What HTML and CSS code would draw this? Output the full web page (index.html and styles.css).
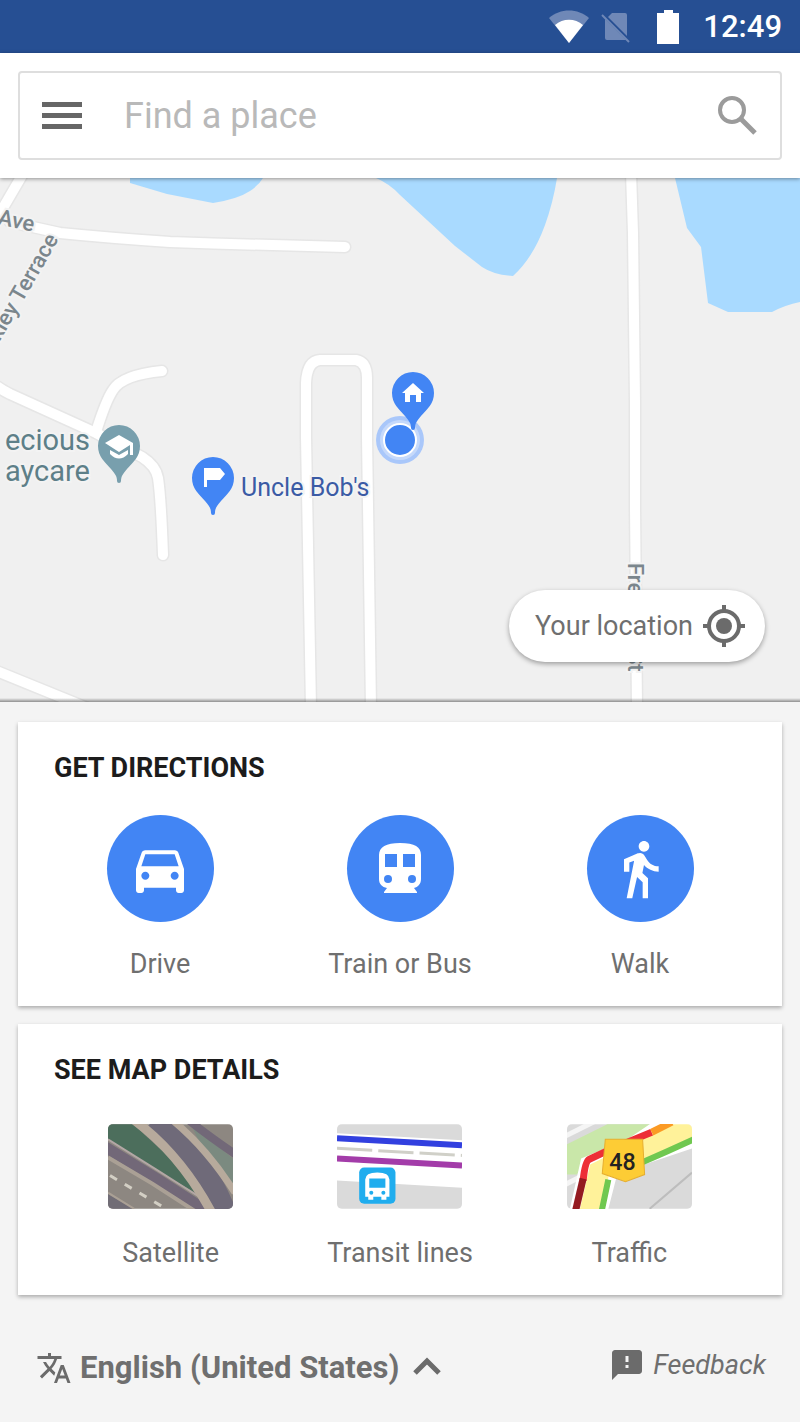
FILE: index.html
```
<!DOCTYPE html>
<html lang="en">
<head>
    <meta charset="UTF-8">
    <meta name="viewport" content="width=device-width, initial-scale=1.0">
    <title>Maps Go</title>
    <link rel="stylesheet" href="styles.css">
</head>
<body>
    <div class="status-bar">
        <svg class="wifi" width="40" height="34" viewBox="0 0 40 34">
            <path fill="#6f88b7" d="M0 8C11-2 29-2 40 8L20 33z"/>
            <path fill="#fff" d="M6 15C14 8 26 8 34 15L20 33z"/>
        </svg>
        <svg class="sim" width="30" height="34" viewBox="0 0 30 34">
            <path fill="#6f88b7" d="M11 3h13a2 2 0 0 1 2 2v21L7 7zM4 9l21 21H6a2 2 0 0 1-2-2z"/>
            <path stroke="#6f88b7" stroke-width="2" d="M1 5l27 27"/>
        </svg>
        <svg class="battery" width="22" height="34" viewBox="0 0 22 34">
            <path fill="#fff" d="M7 0h9v3h6v31H0V3h7z"/>
        </svg>
        <span class="time">12:49</span>
    </div>

    <header>
        <form class="search" role="search">
            <button type="button" class="icon-button" aria-label="Menu">
                <svg width="40" height="28" viewBox="0 0 40 28" fill="#666">
                    <path d="M0 0h40v5H0zM0 11h40v5H0zM0 22h40v5H0z"/>
                </svg>
            </button>
            <input type="text" placeholder="Find a place" aria-label="Find a place">
            <button type="submit" class="icon-button" aria-label="Search">
                <svg width="40" height="40" viewBox="0 0 40 40" fill="none" stroke="#9b9b9b">
                    <circle cx="14" cy="14" r="12" stroke-width="4"/>
                    <path stroke-width="5" d="M23 23l14 14"/>
                </svg>
            </button>
        </form>
    </header>

    <main>
        <section class="map">
            <svg class="map-canvas" viewBox="0 0 800 524" preserveAspectRatio="xMinYMin slice">
                <defs>
                    <path id="pin" d="M0-21a21 21 0 0 1 21 21c0 11-7 16-13 23-4 5-6 7-6 12a2 2 0 0 1-4 0c0-5-2-7-6-12-6-7-13-12-13-23A21 21 0 0 1 0-21z"/>
                    <g id="roads">
                        <path d="M24-6L-4 42"/>
                        <path d="M10 44L60 55Q110 60 170 64Q260 67 345 69"/>
                        <path d="M-6 206Q0 211 10 216L96 255L142 279Q156 288 158 300Q161 320 163 377"/>
                        <path d="M96 254Q106 222 113 212Q122 197 162 193"/>
                        <path d="M311 530L306 259V205Q307 183 320 182H356Q367 184 367 200V259L371 530"/>
                        <path d="M631-6L633 55L635 225V330L637 530"/>
                        <path d="M-6 492L90 531"/>
                    </g>
                </defs>

                <!-- water -->
                <g fill="#a9daff">
                    <path d="M130 0V5L167 16L213 25Q238 21 250 13Q259 7 263 0z"/>
                    <path d="M376 0Q390 6 400 17L455 68L482 89Q494 97 513 98Q533 80 545 47Q553 25 557 0z"/>
                    <path d="M675 0L687 50L701 69L708 125L728 134H772Q785 127 800 124V0z"/>
                </g>

                <!-- roads -->
                <use href="#roads" class="road-edge"/>
                <use href="#roads" class="road"/>

                <!-- street names -->
                <g class="street">
                    <text transform="translate(-3 46) rotate(12)">Ave</text>
                    <text transform="translate(59 61) rotate(-60)" text-anchor="end">kley Terrace</text>
                    <text transform="translate(628 385) rotate(90)">Fremont St</text>
                </g>

                <!-- places -->
                <g class="place place-school">
                    <text x="90" y="272" text-anchor="end">ecious</text>
                    <text x="90" y="303" text-anchor="end">aycare</text>
                </g>
                <g transform="translate(119 268)">
                    <use href="#pin" fill="#789fad"/>
                    <path fill="#fff" d="M-14-3L0-11L14-3V9h-3V-1L0 6zM-9 4L0 9L9 4V8Q0 17-9 8z"/>
                </g>

                <g transform="translate(213 300)">
                    <use href="#pin" fill="#4285f4"/>
                    <path fill="#fff" d="M-9-10H7L12-4L7 2H-6V9h-3z"/>
                </g>
                <text class="place place-saved" x="241" y="318">Uncle Bob's</text>

                <circle cx="400" cy="262" r="24" fill="#a9c7fa"/>
                <circle cx="400" cy="262" r="20" fill="#c5d9fb"/>
                <circle cx="400" cy="262" r="16" fill="#4285f4" stroke="#fff" stroke-width="2"/>

                <g transform="translate(413 215)">
                    <use href="#pin" fill="#4285f4"/>
                    <path fill="#fff" d="M0-10L11 0H8V9H3V2H-3V9H-8V0H-11z"/>
                </g>
            </svg>

            <button type="button" class="location">
                Your location
                <svg width="42" height="42" viewBox="0 0 42 42" fill="none" stroke="#6b6b6b" stroke-width="4">
                    <circle cx="21" cy="21" r="15"/>
                    <circle cx="21" cy="21" r="8" fill="#6b6b6b" stroke="none"/>
                    <path d="M21 0v6M21 36v6M0 21h6M36 21h6"/>
                </svg>
            </button>
        </section>

        <section class="card directions">
            <h2>GET DIRECTIONS</h2>
            <div class="options">
                <button type="button" class="option">
                    <span class="circle">
                        <svg width="64" height="64" viewBox="0 0 24 24" fill="#fff">
                            <path d="M18.92 6.01C18.72 5.42 18.16 5 17.5 5h-11c-.66 0-1.21.42-1.42 1.01L3 12v8c0 .55.45 1 1 1h1c.55 0 1-.45 1-1v-1h12v1c0 .55.45 1 1 1h1c.55 0 1-.45 1-1v-8l-2.08-5.99zM6.5 16c-.83 0-1.5-.67-1.5-1.5S5.67 13 6.5 13s1.5.67 1.5 1.5S7.33 16 6.5 16zm11 0c-.83 0-1.5-.67-1.5-1.5s.67-1.5 1.5-1.5 1.5.67 1.5 1.5-.67 1.5-1.5 1.5zM5 11l1.5-4.5h11L19 11H5z"/>
                        </svg>
                    </span>
                    Drive
                </button>
                <button type="button" class="option">
                    <span class="circle">
                        <svg width="64" height="64" viewBox="0 0 64 64">
                            <path fill="#fff" d="M32 6c15 0 21 4 21 12v24c0 5-3 8-7 9l3 4v1H16v-1l3-4c-5-1-8-4-8-9V18C11 10 18 6 32 6z"/>
                            <path fill="#4285f4" d="M17 17h12v13H17zM35 17h12v13H35z"/>
                            <circle cx="20" cy="42" r="4" fill="#4285f4"/>
                            <circle cx="44" cy="42" r="4" fill="#4285f4"/>
                        </svg>
                    </span>
                    Train or Bus
                </button>
                <button type="button" class="option">
                    <span class="circle">
                        <svg width="64" height="64" viewBox="0 0 24 24" fill="#fff">
                            <path d="M13.5 5.5c1.1 0 2-.9 2-2s-.9-2-2-2-2 .9-2 2 .9 2 2 2zM9.8 8.9L7 23h2.1l1.8-8 2.1 2v6h2v-7.5l-2.1-2 .6-3C14.8 12 16.8 13 19 13v-2c-1.9 0-3.5-1-4.3-2.4l-1-1.6c-.4-.6-1-1-1.7-1-.3 0-.5.1-.8.1L6 8.3V13h2V9.6l1.8-.7"/>
                        </svg>
                    </span>
                    Walk
                </button>
            </div>
        </section>

        <section class="card details">
            <h2>SEE MAP DETAILS</h2>
            <div class="options">
                <button type="button" class="option">
                    <svg class="thumb" viewBox="0 0 124 84">
                        <path fill="#8d8781" d="M0 0h124v84H0z"/>
                        <path fill="#4c6e5c" d="M0 0h25L60 32L90 70L50 47L0 15z"/>
                        <path fill="#7b8a80" d="M82 0L124 34V62L96 28z"/>
                        <path fill="none" stroke="#726878" stroke-width="8" d="M80-4Q100 12 128 31"/>
                        <path fill="none" stroke="#6f6a79" stroke-width="26" d="M46-6Q92 30 116 92"/>
                        <path fill="none" stroke="#726878" stroke-width="11" d="M-4 22L48 54L98 86"/>
                        <path fill="none" stroke="#b3a7a5" stroke-width="2" d="M0 15L48 45L92 73"/>
                        <path fill="none" stroke="#b7aa9c" stroke-width="9" d="M26-4Q72 30 103 88"/>
                        <path fill="none" stroke="#b7aa9c" stroke-width="7" d="M64-4Q98 24 126 68"/>
                        <path fill="none" stroke="#aaa095" stroke-width="4" d="M0 33L44 59L86 86"/>
                        <path fill="none" stroke="#d3cfc4" stroke-width="3" stroke-dasharray="8 9" d="M2 51L56 83"/>
                        <path fill="#716d76" d="M0 69L25 84H0z"/>
                        <path fill="none" stroke="#aaa095" stroke-width="2" d="M0 68L26 84"/>
                    </svg>
                    Satellite
                </button>
                <button type="button" class="option">
                    <svg class="thumb" viewBox="0 0 124 84">
                        <path fill="#dadada" d="M0 0h124v84H0z"/>
                        <path fill="#fff" d="M0 9L124 16V63L0 56z"/>
                        <path stroke="#3240df" stroke-width="6" d="M0 14L124 21"/>
                        <path stroke="#a33ca9" stroke-width="6" d="M0 34L124 41"/>
                        <path stroke="#d0d0c8" stroke-width="3" stroke-dasharray="35 6" d="M0 24L124 31"/>
                        <rect x="22" y="43" width="36" height="36" rx="5" fill="#20adee"/>
                        <path fill="#fff" d="M40 48q12 0 12 7v17h-3v3h-5v-3h-8v3h-5v-3h-3V55q0-7 12-7z"/>
                        <path fill="#20adee" d="M32 54h16v9H32z"/>
                        <circle cx="34" cy="68" r="2" fill="#20adee"/>
                        <circle cx="46" cy="68" r="2" fill="#20adee"/>
                    </svg>
                    Transit lines
                </button>
                <button type="button" class="option">
                    <svg class="thumb" viewBox="0 0 124 84">
                        <path fill="#dadada" d="M0 0h124v84H0z"/>
                        <path fill="#c9e7a9" d="M0 20L40 0H84L60 16L18 34L10 50H0z"/>
                        <path fill="none" stroke="#f5f5f5" stroke-width="5" d="M-4 13L28-3M-4 61L12 53"/>
                        <path fill="#fff" d="M2 88L14 34L60 15L88-4H130V22L50 49L40 88z"/>
                        <path fill="#fff29a" d="M12 88L23 40L68 18L104 0H130V14L42 48L34 88z"/>
                        <path fill="none" stroke="#70c850" stroke-width="6" d="M34 88L41 55M72 39Q100 27 128 14"/>
                        <path fill="none" stroke="#ed2f36" stroke-width="7" d="M16 56Q18 37 22 35L45 24L84 8"/>
                        <path stroke="#fb9a24" stroke-width="7" d="M84 8L104-2"/>
                        <path stroke="#941a20" stroke-width="7" d="M8 88L16 54"/>
                        <path stroke="#bdbdbd" stroke-width="2" d="M82 84L124 48"/>
                        <path fill="#fdcc35" stroke="#e6ae2f" d="M38 15h37l2 35L58 57L35 49z"/>
                        <text class="route" x="55" y="45" text-anchor="middle">48</text>
                    </svg>
                    Traffic
                </button>
            </div>
        </section>
    </main>

    <footer>
        <button type="button" class="language" aria-haspopup="listbox">
            <svg width="36" height="36" viewBox="0 0 24 24" fill="#6b6b6b">
                <path d="M12.87 15.07l-2.54-2.51.03-.03c1.74-1.94 2.98-4.17 3.71-6.53H17V4h-7V2H8v2H1v1.99h11.17C11.5 7.92 10.44 9.75 9 11.35 8.07 10.32 7.3 9.19 6.69 8h-2c.73 1.63 1.73 3.17 2.98 4.56l-5.09 5.02L4 19l5-5 3.11 3.11.76-2.04zM18.5 10h-2L12 22h2l1.12-3h4.75L21 22h2l-4.5-12zm-2.62 7l1.62-4.33L19.12 17h-3.24z"/>
            </svg>
            <span>English (United States)</span>
            <svg width="28" height="22" viewBox="0 0 28 22" fill="none" stroke="#6b6b6b" stroke-width="5">
                <path d="M2 16L14 4l12 12"/>
            </svg>
        </button>
        <a class="feedback" href="#feedback">
            <svg width="36" height="36" viewBox="0 0 24 24" fill="#6b6b6b">
                <path d="M20 2H4c-1.1 0-1.99.9-1.99 2L2 22l4-4h14c1.1 0 2-.9 2-2V4c0-1.1-.9-2-2-2zm-7 12h-2v-2h2v2zm0-4h-2V6h2v4z"/>
            </svg>
            Feedback
        </a>
    </footer>
</body>
</html>
```
FILE: styles.css
```
* {
    box-sizing: border-box;
}

body {
    margin: 0;
    min-height: 100vh;
    display: flex;
    flex-direction: column;
    background-color: #f4f4f4;
    color: #6f6f6f;
    font-family: Roboto, sans-serif;
    font-size: 27px;
}

button {
    padding: 0;
    border: none;
    background: none;
    color: inherit;
    font: inherit;
    cursor: pointer;
}

svg {
    display: block;
    flex-shrink: 0;
}

/* status bar */
.status-bar {
    display: flex;
    align-items: center;
    justify-content: flex-end;
    height: 53px;
    padding: 0 18px;
    background-color: #264f93;
    color: #fff;
}

.sim {
    margin: 0 26px 0 12px;
}

.time {
    margin-left: 24px;
    font-size: 31px;
    font-weight: 500;
}

/* search */
header {
    position: relative;
    z-index: 1;
    padding: 18px;
    background-color: #fff;
    box-shadow: 0 1px 4px rgba(0, 0, 0, 0.4);
}

.search {
    display: flex;
    align-items: center;
    height: 89px;
    padding: 0 22px;
    border: 2px solid #dedede;
    border-radius: 4px;
}

.search input {
    flex: 1;
    min-width: 0;
    margin: 0 42px;
    padding: 0;
    border: none;
    outline: none;
    background: none;
    color: #444;
    font: inherit;
    font-size: 36px;
}

.search input::placeholder {
    color: #b9b9b9;
}

/* map */
.map {
    position: relative;
    height: 524px;
    overflow: hidden;
    background-color: #f0f0f0;
}

/* shadow cast by the panel below */
.map::after {
    content: "";
    position: absolute;
    left: 0;
    right: 0;
    bottom: 0;
    height: 4px;
    background: linear-gradient(rgba(0, 0, 0, 0), rgba(0, 0, 0, 0.4));
}

.map-canvas {
    width: 100%;
    height: 100%;
}

.road,
.road-edge {
    fill: none;
    stroke: #fff;
    stroke-width: 10px;
    stroke-linecap: round;
    stroke-linejoin: round;
}

.road-edge {
    stroke: #e6e6e6;
    stroke-width: 13px;
}

.street,
.place {
    stroke: #f3f3f3;
    stroke-width: 4px;
    paint-order: stroke;
}

.street {
    fill: #7b868c;
    font-size: 22px;
    font-weight: 500;
}

.place-school {
    fill: #5d7f88;
    font-size: 29px;
}

.place-saved {
    fill: #3b5ba5;
    font-size: 25px;
}

.location {
    position: absolute;
    right: 35px;
    bottom: 40px;
    display: flex;
    align-items: center;
    gap: 10px;
    height: 72px;
    padding: 0 20px 0 26px;
    border-radius: 36px;
    background-color: #fff;
    box-shadow: 0 2px 5px rgba(0, 0, 0, 0.35);
}

/* cards */
.card {
    margin: 18px;
    padding: 30px 22px 24px;
    background-color: #fff;
    box-shadow: 0 2px 4px rgba(0, 0, 0, 0.3);
}

.map + .card {
    margin-top: 20px;
}

.card h2 {
    margin: 0 14px;
    color: #1c1c1c;
    font-size: 27px;
    font-weight: 700;
    line-height: 32px;
}

.options {
    display: grid;
    grid-template-columns: repeat(3, 1fr);
}

.option {
    display: flex;
    flex-direction: column;
    align-items: center;
    gap: 24px;
    line-height: 36px;
}

.directions .options {
    margin-top: 31px;
}

.circle {
    display: flex;
    align-items: center;
    justify-content: center;
    width: 107px;
    height: 107px;
    border-radius: 50%;
    background-color: #4285f4;
}

.details .options {
    margin: 38px 16px 0;
}

.details .option {
    gap: 26px;
}

.thumb {
    width: 125px;
    height: 85px;
    border-radius: 5px;
}

.route {
    fill: #222;
    font-size: 23px;
    font-weight: 500;
}

/* footer */
footer {
    display: flex;
    align-items: flex-start;
    justify-content: space-between;
    padding: 34px 34px 0 36px;
}

.language {
    display: flex;
    align-items: center;
    gap: 8px;
    font-size: 31px;
    font-weight: 700;
    line-height: 42px;
}

.language svg:last-child {
    margin-left: 6px;
}

.feedback {
    display: flex;
    align-items: center;
    gap: 8px;
    color: inherit;
    font-style: italic;
    text-decoration: none;
}
```
